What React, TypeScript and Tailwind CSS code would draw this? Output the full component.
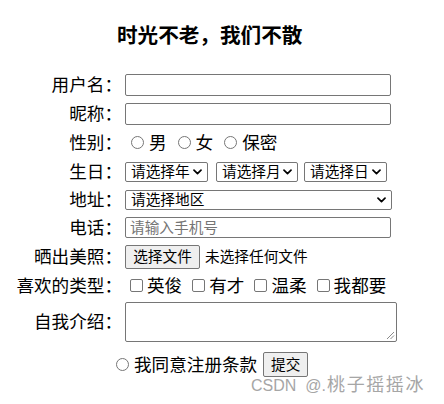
import React from "react";

const Chevron = () => (
  <svg width="9" height="6" viewBox="0 0 9 6" className="shrink-0">
    <path d="M1 1.2 L4.5 4.6 L8 1.2" fill="none" stroke="#000" strokeWidth="1.7" strokeLinecap="round" strokeLinejoin="round" />
  </svg>
);

const Radio = () => (
  <span className="inline-block w-[13px] h-[13px] rounded-full border border-[#767676] bg-white shrink-0" />
);

const Check = () => (
  <span className="inline-block w-[13px] h-[13px] rounded-[2px] border border-[#767676] bg-white shrink-0" />
);

const Select = ({ w, text }: { w: string; text: string }) => (
  <div className={`flex items-center justify-between h-[20px] ${w} border border-[#767676] rounded-[2px] bg-white pl-[5px] pr-[5px] text-[14.67px] leading-[18px]`}>
    <span>{text}</span>
    <Chevron />
  </div>
);

const Row = ({ h, label, children }: { h: string; label: string; children: React.ReactNode }) => (
  <div className={`flex items-center ${h}`}>
    <div className="w-[122px] text-right text-[17.6px] leading-[20px] whitespace-nowrap">{label}</div>
    <div className="ml-[3px] flex items-center">{children}</div>
  </div>
);

export default function App() {
  return (
    <div className="relative w-[444px] h-[404px] bg-white text-black font-['Liberation_Sans','Noto_Sans_CJK_SC',sans-serif] overflow-hidden">
      <div className="h-[70px] pt-[24px] pl-[117px] text-[20.6px] leading-[24px] font-bold whitespace-nowrap">
        时光不老，我们不散
      </div>

      <Row h="h-[29.5px]" label="用户名：">
        <div className="w-[266px] h-[21.5px] border border-[#767676] rounded-[2px]" />
      </Row>
      <Row h="h-[28.5px]" label="昵称：">
        <div className="w-[266px] h-[21.5px] border border-[#767676] rounded-[2px]" />
      </Row>
      <Row h="h-[29px]" label="性别：">
        <div className="flex items-center text-[17.6px] leading-[20px]">
          <span className="ml-[6px]"><Radio /></span>
          <span className="ml-[5px]">男</span>
          <span className="ml-[11px]"><Radio /></span>
          <span className="ml-[5px]">女</span>
          <span className="ml-[11px]"><Radio /></span>
          <span className="ml-[5px]">保密</span>
        </div>
      </Row>
      <Row h="h-[29px]" label="生日：">
        <Select w="w-[83px]" text="请选择年" />
        <div className="ml-[8px]">
          <Select w="w-[82px]" text="请选择月" />
        </div>
        <div className="ml-[6px]">
          <Select w="w-[83px]" text="请选择日" />
        </div>
      </Row>
      <Row h="h-[27px]" label="地址：">
        <Select w="w-[267px]" text="请选择地区" />
      </Row>
      <Row h="h-[29px]" label="电话：">
        <div className="w-[266px] h-[21.5px] border border-[#767676] rounded-[2px] pl-[4px] flex items-center text-[14.67px] leading-[18px] text-[#757575]">
          请输入手机号
        </div>
      </Row>
      <Row h="h-[29px]" label="晒出美照：">
        <div className="w-[75px] h-[24px] border border-[#767676] rounded-[2px] bg-[#efefef] flex items-center justify-center text-[14.67px] leading-[18px]">
          选择文件
        </div>
        <span className="ml-[5px] text-[14.67px] leading-[18px]">未选择任何文件</span>
      </Row>
      <Row h="h-[30px]" label="喜欢的类型：">
        <div className="flex items-center text-[17.6px] leading-[20px]">
          <span className="ml-[5px]"><Check /></span>
          <span className="ml-[4px]">英俊</span>
          <span className="ml-[10px]"><Check /></span>
          <span className="ml-[4px]">有才</span>
          <span className="ml-[10px]"><Check /></span>
          <span className="ml-[4px]">温柔</span>
          <span className="ml-[10px]"><Check /></span>
          <span className="ml-[4px]">我都要</span>
        </div>
      </Row>
      <Row h="h-[42px]" label="自我介绍：">
        <div className="relative w-[272px] h-[40px] border border-[#767676] rounded-[2px]">
          <svg width="9" height="9" viewBox="0 0 9 9" className="absolute right-[1px] bottom-[1px]">
            <path d="M8 1 L1 8 M8 4.5 L4.5 8" stroke="#8a8a8a" strokeWidth="1" fill="none" />
          </svg>
        </div>
      </Row>
      <div className="flex items-center h-[43px] pl-[116px]">
        <Radio />
        <span className="ml-[5px] text-[17.6px] leading-[20px]">我同意注册条款</span>
        <div className="ml-[6px] w-[45px] h-[25px] border border-[#767676] rounded-[2px] bg-[#efefef] flex items-center justify-center text-[14.67px] leading-[18px]">
          提交
        </div>
      </div>

      <div className="absolute left-[251px] top-[375px] flex items-baseline text-[#a6a6a6] whitespace-nowrap leading-[20px]">
        <span className="text-[16px]">CSDN</span>
        <span className="ml-[9px] text-[16px]">@.</span>
        <span className="ml-[1px] text-[18px] tracking-[1.6px]">桃子摇摇冰</span>
      </div>
    </div>
  );
}
